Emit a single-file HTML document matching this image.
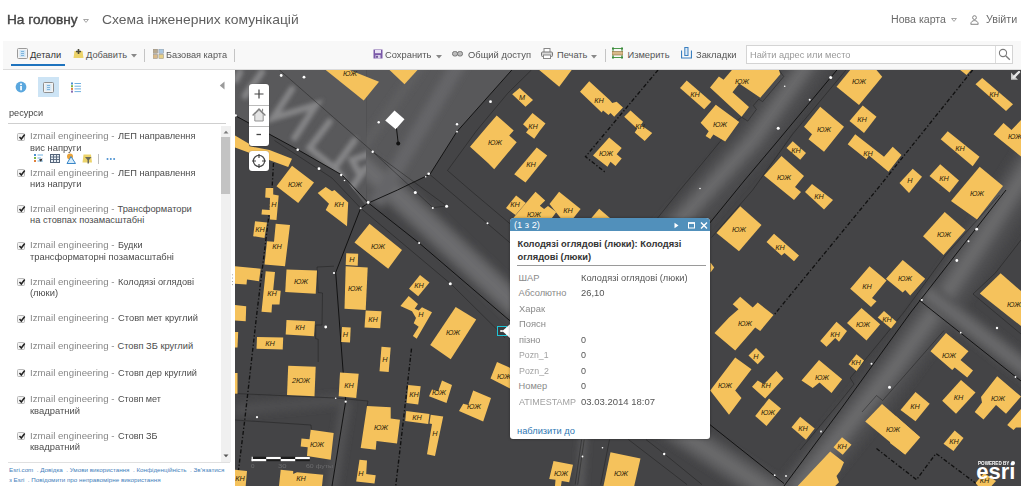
<!DOCTYPE html>
<html><head><meta charset="utf-8"><title>Схема інженерних комунікацій</title>
<style>
html,body{margin:0;padding:0;background:#fff;width:1024px;height:488px;overflow:hidden;font-family:"Liberation Sans",sans-serif}
.abs{position:absolute}
.t{position:absolute;white-space:pre;transform-origin:0 0;line-height:1em;font-family:"Liberation Sans",sans-serif}
#tb{position:absolute;left:3px;top:41px;width:1018px;height:28px;background:#f8f8f8;border-bottom:1px solid #dcdcdc}
#panel{position:absolute;left:3px;top:70px;width:230px;height:416px;background:#fff}
.sep{position:absolute;top:49px;width:1px;height:13px;background:#c4c4c4}
.cb{position:absolute;left:17px;width:8px;height:8px;background:#f4f4f4;border:1px solid #b8b8b8;border-radius:1.5px;box-sizing:border-box}
.cb svg{position:absolute;left:-0.5px;top:-1px}
#map{position:absolute;left:235px;top:70px;width:786px;height:416px;overflow:hidden;background:#444446}
#popup{position:absolute;left:510px;top:218.2px;width:200px;height:221px;background:#fff;border-radius:4px 4px 3px 3px;overflow:hidden;box-shadow:0 0 3px rgba(0,0,0,.35)}
#popup .hd{position:absolute;left:0;top:0;width:200px;height:13px;background:#5190bb}
</style></head><body>
<!-- header -->
<svg class="abs" style="left:83px;top:18.5px" width="6" height="4" viewBox="0 0 6 4"><path d="M0.6 0.5 H5.4 L3 3.4 Z" fill="none" stroke="#8f8f8f" stroke-width="0.8"/></svg>
<svg class="abs" style="left:950.5px;top:18.3px" width="6" height="4" viewBox="0 0 6 4"><path d="M0.6 0.5 H5.4 L3 3.4 Z" fill="none" stroke="#8f8f8f" stroke-width="0.8"/></svg>
<svg class="abs" style="left:969.5px;top:14.5px" width="9" height="10" viewBox="0 0 9 10"><circle cx="4.5" cy="2.6" r="1.9" fill="none" stroke="#777" stroke-width="0.9"/><path d="M0.8 9.3 C0.8 6.6 2.6 5.6 4.5 5.6 C6.4 5.6 8.2 6.6 8.2 9.3 Z" fill="none" stroke="#777" stroke-width="0.9"/></svg>
<!-- toolbar -->
<div id="tb"></div>
<div class="abs" style="left:11px;top:64px;width:54px;height:2px;background:#1e73be"></div>
<div class="sep" style="left:144px"></div><div class="sep" style="left:234px"></div><div class="sep" style="left:605px"></div>
<!-- toolbar icons -->
<svg class="abs" style="left:17px;top:48px" width="11" height="11" viewBox="0 0 11 11"><rect x="0.5" y="0.5" width="10" height="10" rx="1" fill="#f3f3f3" stroke="#9a9a9a"/><rect x="2.5" y="2" width="6" height="7" fill="#cfe6f6"/><path d="M4 3.5H7M4 5.5H7M4 7.5H7" stroke="#7fb5dd" stroke-width="1"/></svg>
<svg class="abs" style="left:73px;top:48px" width="11" height="11" viewBox="0 0 11 11"><path d="M0.5 10 L1.5 3 H9.5 L10.5 10 Z" fill="#ecd36a"/><path d="M5.5 1 V6 M3 3.5 H8" stroke="#4b4b3b" stroke-width="1.6"/></svg>
<svg class="abs" style="left:131px;top:54px" width="6" height="4" viewBox="0 0 6 4"><path d="M0 0H6L3 3.5Z" fill="#888"/></svg>
<svg class="abs" style="left:153px;top:49.3px" width="10.6" height="9.6" viewBox="0 0 10.6 9.6"><rect x="0" y="0" width="4.7" height="4.3" fill="#b7a88f" stroke="#8f8f8f" stroke-width="0.5"/><rect x="5.9" y="0" width="4.7" height="4.3" fill="#a9c6e0" stroke="#8f8f8f" stroke-width="0.5"/><rect x="0" y="5.3" width="4.7" height="4.3" fill="#d8b98a" stroke="#8f8f8f" stroke-width="0.5"/><rect x="5.9" y="5.3" width="4.7" height="4.3" fill="#e6cf86" stroke="#8f8f8f" stroke-width="0.5"/></svg>
<svg class="abs" style="left:373px;top:49px" width="10" height="10" viewBox="0 0 10 10"><path d="M0.5 0.5H9.5V9.5H0.5Z" fill="#7a58a8"/><rect x="2" y="1" width="6" height="3.2" fill="#e9e2f3"/><rect x="2.5" y="6" width="5" height="3.5" fill="#d9d0ea"/><rect x="3.2" y="6.8" width="1.6" height="2" fill="#5a3c88"/></svg>
<svg class="abs" style="left:436px;top:55px" width="6" height="4" viewBox="0 0 6 4"><path d="M0 0H6L3 3.5Z" fill="#888"/></svg>
<svg class="abs" style="left:452px;top:51px" width="11" height="6" viewBox="0 0 11 6"><rect x="0.5" y="0.5" width="5" height="4.5" rx="2" fill="#bbb" stroke="#777"/><rect x="5.5" y="0.5" width="5" height="4.5" rx="2" fill="#bbb" stroke="#777"/></svg>
<svg class="abs" style="left:541px;top:48px" width="12" height="11" viewBox="0 0 12 11"><rect x="3" y="0.5" width="6" height="4" fill="#fff" stroke="#888"/><rect x="0.5" y="4" width="11" height="4.5" rx="1" fill="#d8d8d8" stroke="#777"/><rect x="2.5" y="7" width="7" height="3.5" fill="#fff" stroke="#888"/></svg>
<svg class="abs" style="left:591px;top:55px" width="6" height="4" viewBox="0 0 6 4"><path d="M0 0H6L3 3.5Z" fill="#888"/></svg>
<svg class="abs" style="left:612px;top:47px" width="11" height="12" viewBox="0 0 11 12"><rect x="1" y="1.5" width="9" height="9" fill="none" stroke="#4c9a4c" stroke-width="1"/><rect x="0" y="4.5" width="11" height="3.5" fill="#d8b98a" stroke="#8a6d3b" stroke-width="0.6"/><rect x="0" y="0.5" width="2" height="2" fill="#3c8a3c"/><rect x="9" y="0.5" width="2" height="2" fill="#3c8a3c"/><rect x="0" y="9.5" width="2" height="2" fill="#3c8a3c"/><rect x="9" y="9.5" width="2" height="2" fill="#3c8a3c"/></svg>
<svg class="abs" style="left:681px;top:47px" width="11" height="12" viewBox="0 0 11 12"><path d="M0.5 3.5V11H10.5V3.5" fill="none" stroke="#3a7fc0" stroke-width="1.2"/><rect x="3.8" y="0.5" width="3.2" height="8" fill="#dbeaf7" stroke="#3a7fc0" stroke-width="1"/></svg>
<!-- search -->
<div class="abs" style="left:746px;top:45px;width:267px;height:19px;background:#fff;border:1px solid #d4d4d4;box-sizing:border-box"></div>
<div class="abs" style="left:995px;top:46px;width:1px;height:17px;background:#dcdcdc"></div>
<svg class="abs" style="left:998px;top:48px" width="13" height="13" viewBox="0 0 13 13"><circle cx="5" cy="5" r="3.6" fill="none" stroke="#7a7a7a" stroke-width="1.1"/><path d="M7.7 7.7 L11.8 11.8" stroke="#7a7a7a" stroke-width="1.3"/></svg>
<!-- panel -->
<div id="panel"></div>
<svg class="abs" style="left:15px;top:81px" width="12" height="12" viewBox="0 0 12 12"><circle cx="6" cy="6" r="5.4" fill="#5aa7de"/><rect x="5.2" y="5" width="1.7" height="4.3" fill="#fff"/><circle cx="6" cy="3.2" r="1" fill="#fff"/></svg>
<div class="abs" style="left:38px;top:77px;width:21px;height:19.5px;background:#cde4f5"></div>
<svg class="abs" style="left:43px;top:82px" width="11" height="11" viewBox="0 0 11 11"><rect x="0.5" y="0.5" width="10" height="10" rx="1" fill="#f3f3f3" stroke="#8f8f8f"/><rect x="2.5" y="2" width="6" height="7" fill="#d6e9f7"/><path d="M4 3.5H7M4 5.5H7M4 7.5H7" stroke="#7fb5dd" stroke-width="1"/></svg>
<svg class="abs" style="left:71px;top:82px" width="10" height="11" viewBox="0 0 10 11"><rect x="0" y="0.5" width="2" height="2" fill="#4a90d0"/><rect x="0" y="3.2" width="2" height="2" fill="#7ab648"/><rect x="0" y="5.9" width="2" height="2" fill="#e0803a"/><rect x="0" y="8.6" width="2" height="2" fill="#8a6bb0"/><path d="M3.5 1.5H10M3.5 4.2H10M3.5 6.9H10M3.5 9.6H10" stroke="#6fb0e0" stroke-width="1"/></svg>
<svg class="abs" style="left:219px;top:81px" width="6" height="9" viewBox="0 0 6 9"><path d="M5.5 0.5V8.5L0.8 4.5Z" fill="#9a9a9a"/></svg>
<div class="abs" style="left:8px;top:123px;width:218px;height:1px;background:#cfcfcf"></div>
<div class="cb" style="top:132.5px"><svg width="8" height="8" viewBox="0 0 8 8"><path d="M1.5 4 L3.3 6 L6.7 1.5" stroke="#222" stroke-width="1.5" fill="none"/></svg></div><div class="cb" style="top:169.0px"><svg width="8" height="8" viewBox="0 0 8 8"><path d="M1.5 4 L3.3 6 L6.7 1.5" stroke="#222" stroke-width="1.5" fill="none"/></svg></div><div class="cb" style="top:205.0px"><svg width="8" height="8" viewBox="0 0 8 8"><path d="M1.5 4 L3.3 6 L6.7 1.5" stroke="#222" stroke-width="1.5" fill="none"/></svg></div><div class="cb" style="top:241.5px"><svg width="8" height="8" viewBox="0 0 8 8"><path d="M1.5 4 L3.3 6 L6.7 1.5" stroke="#222" stroke-width="1.5" fill="none"/></svg></div><div class="cb" style="top:278.0px"><svg width="8" height="8" viewBox="0 0 8 8"><path d="M1.5 4 L3.3 6 L6.7 1.5" stroke="#222" stroke-width="1.5" fill="none"/></svg></div><div class="cb" style="top:314.5px"><svg width="8" height="8" viewBox="0 0 8 8"><path d="M1.5 4 L3.3 6 L6.7 1.5" stroke="#222" stroke-width="1.5" fill="none"/></svg></div><div class="cb" style="top:342.0px"><svg width="8" height="8" viewBox="0 0 8 8"><path d="M1.5 4 L3.3 6 L6.7 1.5" stroke="#222" stroke-width="1.5" fill="none"/></svg></div><div class="cb" style="top:369.0px"><svg width="8" height="8" viewBox="0 0 8 8"><path d="M1.5 4 L3.3 6 L6.7 1.5" stroke="#222" stroke-width="1.5" fill="none"/></svg></div><div class="cb" style="top:395.5px"><svg width="8" height="8" viewBox="0 0 8 8"><path d="M1.5 4 L3.3 6 L6.7 1.5" stroke="#222" stroke-width="1.5" fill="none"/></svg></div><div class="cb" style="top:432.0px"><svg width="8" height="8" viewBox="0 0 8 8"><path d="M1.5 4 L3.3 6 L6.7 1.5" stroke="#222" stroke-width="1.5" fill="none"/></svg></div>
<!-- layer row icons -->
<svg class="abs" style="left:32px;top:152.5px" width="86" height="12" viewBox="0 0 84 12">
 <g><rect x="1" y="1" width="2" height="2" fill="#4a90d0"/><rect x="1" y="4" width="2" height="2" fill="#7ab648"/><rect x="1" y="7" width="2" height="2" fill="#e0803a"/><path d="M4.5 2H10M4.5 5H8M4.5 8H10" stroke="#6fb0e0" stroke-width="1"/><path d="M6 6.5L9.5 5.5L8 9" fill="#333"/></g>
 <g transform="translate(17,0)"><rect x="0.5" y="1.5" width="9" height="8" fill="#e8eef5" stroke="#55657a"/><path d="M0.5 4H9.5M0.5 6.5H9.5M3.5 1.5V9.5M6.5 1.5V9.5" stroke="#55657a" stroke-width="0.9"/></g>
 <g transform="translate(33,0)"><circle cx="4" cy="3.5" r="3" fill="#e8a23a"/><path d="M1 10.5L5 3.5L9.5 10.5Z" fill="#d7ecfa" stroke="#3a86c8" stroke-width="1"/></g>
 <g transform="translate(49,0)"><path d="M0.5 9.5L1.5 1.5H9L10 9.5Z" fill="#ecd36a"/><path d="M3 4H9.5L7 7V10.5H5.5V7Z" fill="#6a6a5a"/></g>
 <path d="M65.5 1V11" stroke="#bdbdbd"/>
 <circle cx="74.5" cy="6" r="1" fill="#4a90d0"/><circle cx="77.8" cy="6" r="1" fill="#4a90d0"/><circle cx="81.1" cy="6" r="1" fill="#4a90d0"/>
</svg>
<!-- scrollbar -->
<div class="abs" style="left:221px;top:126px;width:9.7px;height:336px;background:#f0f0f0"></div>
<div class="abs" style="left:221px;top:137.2px;width:9px;height:56.6px;background:#c3c3c3"></div>
<svg class="abs" style="left:222.6px;top:130px" width="6" height="4" viewBox="0 0 6 4"><path d="M0.5 3.5H5.5L3 0.8Z" fill="#7a7a7a"/></svg>
<svg class="abs" style="left:222.6px;top:453.5px" width="6" height="4" viewBox="0 0 6 4"><path d="M0.5 0.5H5.5L3 3.2Z" fill="#555"/></svg>
<div class="abs" style="left:8px;top:462px;width:222px;height:1px;background:#e0e0e0"></div>
<!-- drag dots -->
<svg class="abs" style="left:231px;top:273px" width="3" height="14" viewBox="0 0 3 14"><circle cx="1.5" cy="1.8" r="0.55" fill="#999"/><circle cx="1.5" cy="5" r="0.55" fill="#999"/><circle cx="1.5" cy="8.5" r="0.55" fill="#999"/><circle cx="1.5" cy="11.6" r="0.55" fill="#999"/></svg>

<!-- MAP -->
<div id="map">
<svg width="786" height="416" viewBox="235 70 786 416" style="position:absolute;left:0;top:0">
<defs>
 <filter id="b3" x="-20%" y="-20%" width="140%" height="140%"><feGaussianBlur stdDeviation="3"/></filter>
 <filter id="b2" x="-20%" y="-20%" width="140%" height="140%"><feGaussianBlur stdDeviation="2"/></filter><filter id="b6" x="-20%" y="-20%" width="140%" height="140%"><feGaussianBlur stdDeviation="6"/></filter>
</defs>
<rect x="235" y="70" width="786" height="416" fill="#444446"/>
<clipPath id="cpA"><path d="M235 70 H366.2 V206 L342 175 L297 149.2 L235 115.5 Z"/></clipPath>
<clipPath id="cpB"><path d="M366.2 70 H1021 V486 H235 V115.5 L297 149.2 L342 175 L366.2 206 Z"/></clipPath>
<g clip-path="url(#cpA)"><rect x="235" y="70" width="132" height="140" fill="#59595b"/>
<g filter="url(#b2)" fill="none" stroke="#8e8e90" stroke-width="6.5" stroke-linecap="round" opacity="0.85">
<path d="M292 89 L273 118 L316 105 L294.5 138"/>
<path d="M329.5 121.7 L309.5 148 L334.5 168 L354.5 140.5"/><path d="M334.5 168 L342 178"/>
<path d="M366 168 L350 190 M375 152 L352 160 L360 175"/>
<path d="M262 72 L245 96 M240 72 L236 80"/>
</g></g>
<g clip-path="url(#cpB)"><path d="M366.2 70 H512 L456.7 131.9 L430 174.2 L397.5 190 L368.4 203 L366.2 206 Z" fill="#58585a"/><g id="roads" filter="url(#b3)" fill="none" stroke-linecap="butt">
<path d="M350.0 154.0 L394.0 192.0 L512.0 302.0 L558.0 345.0" stroke="#555557" stroke-width="29" opacity="1"/><path d="M350.0 154.0 L394.0 192.0 L512.0 302.0 L558.0 345.0" stroke="#626264" stroke-width="22" opacity="1"/><path d="M350.0 154.0 L394.0 192.0 L512.0 302.0 L558.0 345.0" stroke="#6c6c6e" stroke-width="13" opacity="1"/><path d="M828.0 36.0 L805.0 70.0 L755.0 140.0 L688.0 217.4 L634.0 276.0" stroke="#4c4c4e" stroke-width="40" opacity="1"/><path d="M826.0 36.0 L803.0 70.0 L753.0 140.0 L683.0 217.4 L630.0 276.0" stroke="#535355" stroke-width="26" opacity="1"/><path d="M826.0 36.0 L803.0 70.0 L753.0 140.0 L683.0 217.4 L630.0 276.0" stroke="#5f5f61" stroke-width="17.16" opacity="1"/><path d="M826.0 36.0 L803.0 70.0 L753.0 140.0 L683.0 217.4 L630.0 276.0" stroke="#69696b" stroke-width="8.84" opacity="1"/><path d="M1043.0 148.0 L989.0 232.0 L935.0 314.0 L896.0 368.0 L793.0 497.0" stroke="#4c4c4e" stroke-width="42" opacity="1"/><path d="M1041.0 148.0 L987.0 232.0 L933.0 314.0 L894.0 368.0 L791.0 497.0" stroke="#535355" stroke-width="30" opacity="1"/><path d="M1041.0 148.0 L987.0 232.0 L933.0 314.0 L894.0 368.0 L791.0 497.0" stroke="#5f5f61" stroke-width="19.8" opacity="1"/><path d="M1041.0 148.0 L987.0 232.0 L933.0 314.0 L894.0 368.0 L791.0 497.0" stroke="#69696b" stroke-width="10.200000000000001" opacity="1"/><path d="M926.0 292.0 L1041.0 381.0" stroke="#535355" stroke-width="23" opacity="1"/><path d="M926.0 292.0 L1041.0 381.0" stroke="#5f5f61" stroke-width="15.180000000000001" opacity="1"/><path d="M926.0 292.0 L1041.0 381.0" stroke="#69696b" stroke-width="7.82" opacity="1"/><path d="M600.0 380.0 L692.0 440.0 L760.5 484.6 L790.0 504.0" stroke="#535355" stroke-width="30" opacity="1"/><path d="M600.0 380.0 L692.0 440.0 L760.5 484.6 L790.0 504.0" stroke="#5f5f61" stroke-width="19.8" opacity="1"/><path d="M600.0 380.0 L692.0 440.0 L760.5 484.6 L790.0 504.0" stroke="#69696b" stroke-width="10.200000000000001" opacity="1"/><path d="M584.0 430.0 L580.0 490.0" stroke="#58585a" stroke-width="8" opacity="1"/><path d="M346.0 401.0 L332.0 490.0" stroke="#515153" stroke-width="12" opacity="1"/><path d="M235.0 410.0 L300.0 404.0 L340.0 400.0" stroke="#4d4d4f" stroke-width="12" opacity="1"/><path d="M461.0 60.0 L455.0 70.0 L407.5 150.5 L376.0 204.0" stroke="#656567" stroke-width="15" opacity="1"/><path d="M423.0 60.0 L417.5 70.0 L375.0 130.5 L360.0 152.0" stroke="#5e5e60" stroke-width="9" opacity="1"/>
</g></g>
<g id="thin" fill="none" stroke="#1a1a1a" stroke-width="0.45">
<path d="M279.5 70.0 L372.7 151.7"/><path d="M372.7 151.7 L432.9 207.6 L446.7 206.0 L372.7 151.7"/><path d="M846.0 70.0 L793.0 133.6 L752.7 190.0 L711.5 237.5"/><path d="M999.7 195.0 L945.2 255.5 L904.0 312.0 L890.2 329.2 L850.2 378.0 L854.0 384.2 L839.0 403.0 L800.0 450.0"/><path d="M779.0 70.0 L783.7 76.6 L762.6 101.6 L758.7 99.2 L753.3 105.5 L756.4 109.4 L747.8 121.1 L741.6 117.2 L737.6 120.3 L700.0 166.0 L680.0 190.0 L656.0 220.0"/><path d="M235.0 393.5 L335.7 398.0 L368.0 401.0 L367.0 406.0"/><path d="M235.0 420.0 L311.0 425.0 L311.5 430.0"/><path d="M646.0 439.6 L664.0 453.6 L702.0 484.6"/><path d="M628.5 439.6 L687.0 484.6"/><path d="M581.6 439.6 L575.2 484.6"/><path d="M584.2 439.6 L577.7 484.6"/><path d="M609.5 439.6 L600.6 484.6"/><path d="M995.7 272.7 L973.0 294.0 L1021.0 334.0"/><path d="M1021.0 240.0 L995.7 272.7"/><path d="M944.0 330.5 L882.7 400.5 L876.5 395.5 L862.0 412.0"/><path d="M531.4 70.0 L507.8 93.2 L476.4 130.9 L447.5 170.5 L470.0 190.0 L515.0 228.0"/><path d="M334.0 266.2 L317.0 267.0 L318.2 292.5 L322.5 293.0 L322.0 325.0 L315.7 325.0 L315.7 338.7 L318.2 339.2 L318.2 362.0"/><path d="M274.5 140.5 L332.0 178.0 L360.7 208.2 L451.4 284.4 L497.4 329.9 L505.0 338.0"/><path d="M429.5 174.2 L515.0 247.0"/>
</g>
<g id="lines" fill="none" stroke="#0c0c0c" stroke-width="0.9">
<path d="M235.0 115.5 L297.0 149.2 L342.0 175.0 L368.4 203.0 L419.1 243.0 L505.1 316.7 L512.0 322.5"/><path d="M368.4 203.0 L360.7 208.2 L335.7 272.5 L343.2 372.5 L345.7 401.2 L332.0 486.0"/><path d="M511.8 70.0 L456.7 131.9 L430.0 174.2 L397.5 190.0 L368.4 203.0"/><path d="M836.9 70.0 L775.2 144.0 L744.0 181.0 L700.0 235.0"/><path d="M1006.0 190.0 L911.0 312.0 L840.2 410.0 L784.0 486.0"/><path d="M710.0 424.7 L784.0 483.5"/><path d="M919.0 300.0 L1021.0 381.0"/>
</g>
<g id="dashes" fill="none" stroke="#111" stroke-width="1.35" stroke-dasharray="4 2 1.3 2">
<path d="M658.0 70.0 L585.5 156.7 L605.5 172.5"/><path d="M972.7 70.0 L876.5 190.0 L774.0 315.0"/><path d="M273.5 163.0 L272.0 190.0 L257.0 312.0 L244.5 422.0 L236.5 486.0"/><path d="M411.5 348.7 L403.2 422.0 L395.7 486.0"/><path d="M876.5 448.5 L916.5 479.7 L936.0 453.5 L973.0 481.2 L985.0 490.0"/>
</g>
<g fill="#f5c25c"><polygon points="325.7,70.0 349.5,70.0 379.0,81.7 363.7,100.5"/><polygon points="389.5,70.0 417.5,70.0 404.5,84.2"/><polygon points="488.0,125.5 470.0,146.7 488.0,163.0 494.2,169.2 516.7,142.2 509.2,135.5 513.7,130.5 496.7,115.5"/><polygon points="235.0,135.5 249.0,143.7 249.5,146.2 269.5,150.0 292.0,158.7 288.2,167.0 235.0,147.5"/><polygon points="276.5,186.2 292.0,165.7 314.0,182.5 298.2,203.0"/><polygon points="539.2,70.0 571.7,70.0 559.2,86.7"/><polygon points="512.2,94.2 519.7,88.0 533.0,100.0 525.5,106.7"/><polygon points="523.0,124.2 532.5,113.0 545.5,123.5 540.0,130.5 534.2,138.7 526.0,132.5 528.5,129.2"/><polygon points="514.2,174.2 536.7,147.5 547.2,155.5 525.5,182.5"/><polygon points="580.0,91.7 589.2,81.2 609.7,100.0 612.2,103.0 616.7,101.7 623.0,107.5 614.2,116.7 610.5,113.0 608.5,115.0 603.0,110.5 601.7,112.5"/><polygon points="624.2,116.7 630.5,110.5 643.0,121.7 641.0,125.0 652.2,133.0 644.7,141.0 634.7,132.5 637.2,128.7"/><polygon points="593.0,155.5 609.2,137.5 621.7,148.0 616.7,154.2 621.7,158.5 615.5,166.0 610.5,161.7 607.5,166.7"/><polygon points="680.0,88.0 686.7,80.5 711.2,101.7 704.2,109.2"/><polygon points="710.0,87.5 718.9,76.6 723.6,79.7 731.9,70.0 779.0,70.0 780.3,74.2 760.3,97.7 739.2,83.6 732.5,92.2 749.0,107.0 741.6,116.7"/><polygon points="700.6,122.7 715.8,104.7 739.2,121.9 725.2,141.4 713.4,134.4 710.3,139.1 705.6,136.0 708.7,131.3"/><polygon points="836.5,86.7 850.2,70.0 876.5,70.0 882.2,76.7 859.0,105.0"/><polygon points="849.5,121.0 862.7,105.5 876.5,116.7 864.0,133.0"/><polygon points="804.0,126.7 820.2,106.7 844.0,126.7 824.0,151.7 808.5,139.2 812.0,134.2"/><polygon points="786.5,148.0 792.7,141.2 806.0,153.0 800.2,159.7"/><polygon points="764.0,175.5 781.5,156.0 804.0,176.0 795.0,187.0 801.0,192.0 794.0,200.0"/><polygon points="847.7,144.2 855.2,134.2 884.0,156.7 892.7,146.7 901.5,155.0 888.5,171.7 869.0,155.5 866.5,159.2"/><polygon points="899.5,183.0 912.7,168.7 922.0,176.7 909.0,193.0"/><polygon points="929.5,176.0 940.2,164.2 959.0,180.5 949.5,192.5"/><polygon points="940.7,139.2 947.7,131.2 979.5,156.7 972.7,166.2"/><polygon points="975.5,84.2 982.2,78.0 1013.0,104.2 1006.0,111.0"/><polygon points="951.0,201.0 979.7,166.7 1003.0,186.0 977.0,219.5"/><polygon points="960.2,70.0 971.0,70.0 966.5,75.0"/><polygon points="993.5,134.2 1003.5,123.0 1011.5,130.0 1021.0,120.0 1021.0,156.5"/><polygon points="265.7,188.0 273.2,188.0 273.2,194.5 278.7,195.5 276.5,220.0 270.0,219.5 270.0,215.0 261.5,214.5 262.0,209.5 269.5,210.0 270.0,198.0 265.2,197.5"/><polygon points="317.7,193.0 325.7,187.0 332.0,191.2 334.5,190.0 348.2,202.5 347.0,226.2 325.7,210.0 329.0,203.7"/><polygon points="255.0,221.2 267.0,222.5 264.5,238.0 253.2,236.2"/><polygon points="275.7,223.7 290.0,225.0 285.0,266.2 264.5,264.5 267.0,241.2 274.0,241.7"/><polygon points="235.0,266.2 260.7,268.7 259.0,281.2 247.0,279.5 246.5,284.5 235.0,283.7"/><polygon points="265.7,271.2 275.0,272.0 273.2,290.0 280.7,290.7 279.5,304.5 272.0,304.5 271.5,312.5 261.5,311.7"/><polygon points="286.5,269.5 317.0,270.5 315.7,293.7 285.2,292.0"/><polygon points="346.2,253.2 358.2,253.7 357.7,265.7 345.7,265.0"/><polygon points="345.7,266.2 367.7,267.5 365.7,310.0 344.5,308.7"/><polygon points="354.5,242.5 369.5,223.7 402.0,250.0 388.2,268.7"/><polygon points="409.0,288.7 420.0,275.0 429.5,282.5 418.2,296.2"/><polygon points="400.4,306.0 408.7,296.0 418.0,304.0 414.7,308.7 418.7,310.4 422.0,307.3 432.0,312.3 416.7,338.7 412.9,336.0 418.7,326.7 413.7,323.3 416.0,318.0 412.0,311.3"/><polygon points="235.0,305.0 246.2,306.2 245.7,321.2 235.0,320.5"/><polygon points="506.0,208.0 516.1,195.5 525.8,203.0 515.5,215.0"/><polygon points="512.9,218.6 535.5,191.8 545.2,200.4 539.8,205.8 544.1,209.0 548.0,206.0 556.3,212.0 551.6,218.6"/><polygon points="549.5,204.1 559.1,191.8 580.6,209.0 573.1,218.6 561.0,218.6"/><polygon points="591.0,218.5 599.2,208.7 610.5,218.5"/><polygon points="716.5,233.0 740.2,206.2 761.5,225.0 739.0,251.2"/><polygon points="710.5,262.5 714.2,267.5 710.5,272.5"/><polygon points="805.0,192.0 812.0,184.0 833.0,200.0 824.0,209.5"/><polygon points="766.5,242.0 774.0,233.7 799.0,255.5 794.0,261.2 784.5,253.0 781.5,255.5"/><polygon points="923.0,236.2 944.7,212.0 965.5,230.0 943.5,255.0"/><polygon points="850.2,288.7 869.5,266.2 886.5,280.5 872.0,298.0 876.5,301.2 871.0,307.0"/><polygon points="886.0,278.7 902.7,260.0 925.2,278.7 910.2,295.5 905.2,290.0 902.7,292.5"/><polygon points="979.8,293.4 1000.6,273.2 1021.0,291.0 1021.0,326.0"/><polygon points="286.5,320.0 315.0,321.2 314.0,336.2 285.7,334.5"/><polygon points="257.0,337.0 283.2,337.5 282.7,349.5 256.5,348.7"/><polygon points="235.0,332.0 238.2,332.0 237.5,347.5 235.0,347.5"/><polygon points="235.0,373.0 237.5,373.0 237.5,393.7 235.0,393.7"/><polygon points="288.2,365.7 315.7,366.7 314.5,396.2 287.0,395.0"/><polygon points="365.7,310.5 381.5,311.2 380.2,328.2 364.5,327.5"/><polygon points="342.0,327.0 350.7,327.5 350.0,342.5 341.2,342.0"/><polygon points="381.5,346.7 390.7,347.5 388.7,372.0 379.5,371.2"/><polygon points="340.0,372.5 358.7,373.7 356.2,398.0 338.7,396.2"/><polygon points="430.2,345.0 455.7,307.0 476.2,319.5 450.7,359.2"/><polygon points="408.2,385.0 420.7,386.2 418.2,404.5 406.5,403.0"/><polygon points="429.0,396.2 432.0,389.5 438.2,391.2 442.0,380.5 452.0,385.0 446.5,403.0"/><polygon points="459.0,411.0 463.2,403.7 468.2,405.0 473.2,390.5 491.0,398.0 488.0,407.0 483.2,421.5"/><polygon points="367.0,406.0 390.7,407.2 390.7,418.5 400.0,419.7 397.0,443.5 376.5,441.0 375.7,449.7 360.7,448.0"/><polygon points="310.7,429.7 333.7,433.0 330.7,459.7 307.0,456.0 307.7,447.2 300.7,446.5 301.5,438.5 309.5,439.2"/><polygon points="235.0,469.7 247.0,471.0 245.7,486.0 235.0,486.0"/><polygon points="280.7,469.7 293.2,471.0 293.2,474.0 297.0,472.2 323.2,474.7 322.0,486.0 279.0,486.0"/><polygon points="359.5,459.7 367.0,460.5 366.2,474.0 375.7,475.2 374.5,483.5 356.2,481.5"/><polygon points="406.2,411.0 429.5,414.0 428.2,424.0 405.2,421.0"/><polygon points="430.7,414.7 443.2,416.5 435.0,456.0 427.0,454.2 432.0,424.0 429.5,423.5"/><polygon points="490.5,378.5 497.0,362.0 515.0,370.0 510.0,388.5"/><polygon points="549.2,479.0 553.5,461.0 573.0,464.7 569.2,482.2 561.7,481.0 561.0,486.0 555.0,486.0 555.5,479.7"/><polygon points="603.5,486.0 610.5,452.2 640.5,458.5 634.2,486.0"/><polygon points="714.5,333.0 729.0,317.5 738.5,309.2 732.7,304.2 740.2,296.7 752.7,307.5 757.7,302.5 773.5,315.0 760.2,331.0 755.2,327.5 735.2,350.5"/><polygon points="748.5,355.5 756.0,348.0 764.7,356.7 757.7,364.2"/><polygon points="710.2,390.5 735.2,357.5 751.5,369.2 735.2,390.5 741.5,398.0 729.0,414.7"/><polygon points="752.0,386.7 757.7,380.5 764.0,384.2 776.5,371.0 783.5,378.5 765.2,398.5"/><polygon points="755.2,416.0 769.0,398.5 781.0,408.5 766.5,426.0"/><polygon points="791.5,427.2 800.2,416.7 814.7,428.5 806.0,439.7"/><polygon points="820.2,341.0 836.5,321.7 847.0,331.0 839.0,341.7 835.2,338.0 826.5,346.7"/><polygon points="847.0,323.0 861.5,308.0 880.2,324.2 866.5,340.5"/><polygon points="877.7,317.5 884.0,311.0 896.5,321.7 891.0,328.5"/><polygon points="848.5,364.2 856.5,354.2 864.0,360.5 856.5,371.0"/><polygon points="801.5,380.5 819.0,360.0 842.2,379.2 831.5,393.0 819.5,382.5 812.7,388.0"/><polygon points="833.5,447.2 842.0,437.2 851.5,444.7 842.7,454.7"/><polygon points="797.7,486.0 830.2,451.5 844.0,462.2 840.2,471.0 836.5,476.0 839.0,482.2 835.2,486.0"/><polygon points="865.2,421.5 882.0,404.0 920.2,437.2 905.2,454.7"/><polygon points="900.5,410.0 915.5,392.0 929.7,403.7 915.5,421.2"/><polygon points="930.5,351.2 946.0,333.0 968.5,351.2 960.5,360.0 973.0,370.5 967.2,377.5 954.7,367.5 952.2,370.0"/><polygon points="942.2,400.7 961.0,380.0 975.5,392.5 956.0,413.7"/><polygon points="981.0,397.0 997.2,376.2 1021.0,396.5 1006.0,413.7 996.0,405.0 983.5,419.5 974.7,412.0 982.0,402.5"/><polygon points="1007.2,425.0 1021.0,409.0 1021.0,427.5 1016.0,427.5 1013.5,430.0"/><polygon points="896.0,416.2 919.7,437.0 904.5,454.0 890.0,443.0"/><polygon points="943.5,443.7 954.7,430.5 963.5,438.0 953.5,451.0"/><polygon points="975.5,483.0 984.0,473.0 996.0,481.0 991.5,486.0 978.0,486.0"/></g>
<g font-family='"Liberation Sans", sans-serif' font-size="7.3" font-style="italic" fill="#2e240c" text-anchor="middle"><text x="350" y="76.1">ЮЖ</text><text x="295" y="186.6">ЮЖ</text><text x="495" y="144.6">ЮЖ</text><text x="522" y="100.1">М</text><text x="533" y="128.6">КН</text><text x="531" y="166.6">КН</text><text x="599" y="102.6">КН</text><text x="640" y="128.6">КН</text><text x="606" y="155.6">ЮЖ</text><text x="695" y="97.1">КН</text><text x="742" y="83.6">ЮЖ</text><text x="720" y="126.6">ЮЖ</text><text x="859" y="83.6">ЮЖ</text><text x="862" y="121.6">КН</text><text x="824" y="131.6">ЮЖ</text><text x="796" y="152.6">КН</text><text x="784" y="179.6">ЮЖ</text><text x="868" y="155.6">КН</text><text x="910" y="182.6">Н</text><text x="944" y="180.6">КН</text><text x="960" y="151.1">КН</text><text x="994" y="96.6">КН</text><text x="977" y="195.6">ЮЖ</text><text x="1015" y="138.6">ЮЖ</text><text x="274" y="206.6">Н</text><text x="339" y="206.6">КН</text><text x="260" y="231.6">КН</text><text x="277" y="248.6">КН</text><text x="272" y="295.6">КН</text><text x="301" y="284.1">ЮЖ</text><text x="352" y="262.1">Н</text><text x="355" y="290.6">ЮЖ</text><text x="378" y="248.6">ЮЖ</text><text x="419" y="288.1">КН</text><text x="515" y="207.1">КН</text><text x="534" y="216.6">ЮЖ</text><text x="568" y="213.1">КН</text><text x="739" y="231.6">ЮЖ</text><text x="819" y="198.6">КН</text><text x="780" y="249.6">КН</text><text x="944" y="236.6">ЮЖ</text><text x="867" y="288.6">КН</text><text x="905" y="280.6">ЮЖ</text><text x="1014" y="306.6">ЮЖ</text><text x="300" y="330.1">КН</text><text x="270" y="345.6">КН</text><text x="301" y="383.1">2ЮЖ</text><text x="373" y="321.6">КН</text><text x="345.5" y="337.1">Н</text><text x="385" y="361.6">Н</text><text x="349" y="387.6">КН</text><text x="421" y="316.6">Н</text><text x="453" y="335.1">ЮЖ</text><text x="414" y="396.6">КН</text><text x="439" y="395.1">ЮЖ</text><text x="474" y="408.6">ЮЖ</text><text x="381" y="430.1">ЮЖ</text><text x="317" y="447.1">ЮЖ</text><text x="240" y="480.6">КН</text><text x="301" y="481.1">КН</text><text x="361" y="475.6">Н</text><text x="417" y="419.6">КН</text><text x="435" y="435.6">Н</text><text x="504" y="379.1">ЮЖ</text><text x="561" y="475.6">ЮЖ</text><text x="621" y="476.1">ЮЖ</text><text x="745" y="325.6">ЮЖ</text><text x="756" y="358.6">Н</text><text x="725" y="387.6">ЮЖ</text><text x="766" y="387.6">КН</text><text x="768" y="414.6">ЮЖ</text><text x="803" y="430.6">КН</text><text x="835" y="336.6">КН</text><text x="863" y="326.6">ЮЖ</text><text x="887" y="322.1">КН</text><text x="856" y="364.6">КН</text><text x="822" y="379.6">ЮЖ</text><text x="842" y="448.6">КН</text><text x="893" y="431.6">ЮЖ</text><text x="949" y="357.6">ЮЖ</text><text x="958.5" y="399.6">КН</text><text x="998" y="400.6">ЮЖ</text><text x="915" y="408.6">КН</text><text x="954" y="443.6">КН</text><text x="984.5" y="482.6">КН</text></g>
<g id="dots" fill="#fff"><circle cx="281.2" cy="75.5" r="1.4"/><circle cx="304" cy="77.2" r="1.4"/><circle cx="235.7" cy="115.5" r="1.2"/><circle cx="297.7" cy="149.7" r="1.3"/><circle cx="319" cy="168.7" r="1.4"/><circle cx="341.2" cy="175" r="1.2"/><circle cx="344.5" cy="180.5" r="0.8"/><circle cx="378.7" cy="122.2" r="1.2"/><circle cx="372.7" cy="151.7" r="1.2"/><circle cx="457" cy="124.2" r="1.2"/><circle cx="457" cy="131.7" r="0.9"/><circle cx="428.7" cy="173.7" r="1.3"/><circle cx="425.7" cy="176.7" r="0.8"/><circle cx="490.5" cy="101.7" r="1.4"/><circle cx="700" cy="188.5" r="0.8"/><circle cx="830.7" cy="77.5" r="1.5"/><circle cx="784.7" cy="86.2" r="0.8"/><circle cx="809.7" cy="99.7" r="1"/><circle cx="778.2" cy="128.2" r="1.5"/><circle cx="415.3" cy="192.5" r="1.5"/><circle cx="368.2" cy="202.5" r="1.4"/><circle cx="360.7" cy="208.2" r="1"/><circle cx="432.8" cy="208" r="1"/><circle cx="446.6" cy="206.3" r="1.5"/><circle cx="487.5" cy="223.2" r="1"/><circle cx="419.1" cy="243" r="1"/><circle cx="450.3" cy="283.7" r="1.5"/><circle cx="334" cy="273" r="1.1"/><circle cx="976.7" cy="229.2" r="1.4"/><circle cx="968.5" cy="241.2" r="1"/><circle cx="956.8" cy="260.5" r="1.4"/><circle cx="921.8" cy="300" r="1.1"/><circle cx="325.7" cy="327" r="1.4"/><circle cx="335.7" cy="398.2" r="0.8"/><circle cx="345.7" cy="401.7" r="1.1"/><circle cx="257" cy="417.2" r="1.1"/><circle cx="602.5" cy="447.7" r="0.8"/><circle cx="582.5" cy="456.5" r="0.9"/><circle cx="664.2" cy="454" r="1.2"/><circle cx="889.5" cy="387.2" r="1.5"/><circle cx="821" cy="431.5" r="0.9"/><circle cx="774.7" cy="475.2" r="0.9"/><circle cx="786" cy="476" r="0.9"/><circle cx="871.5" cy="363.7" r="1"/><circle cx="960.7" cy="332.7" r="0.9"/><circle cx="997" cy="328" r="1.2"/><circle cx="1015.5" cy="377" r="0.9"/></g>

<path d="M394.5 110.5 L404.5 119.2 L395.7 129.2 L385.2 120.5 Z" fill="#fff"/>
<path d="M396.5 128.5 L398.2 143" stroke="#111" stroke-width="1" fill="none"/>
<circle cx="398.2" cy="143.5" r="2" fill="#111"/>
<g stroke="none">
<rect x="251.6" y="456.7" width="58.2" height="4.5" fill="#1c1c1c"/>
<rect x="251.6" y="456.7" width="1.2" height="4.5" fill="#fff"/>
<rect x="251.6" y="459" width="14.6" height="2.2" fill="#fff"/>
<rect x="266.2" y="456.9" width="14.5" height="2.2" fill="#fff"/>
<rect x="280.7" y="459" width="14.5" height="2.2" fill="#fff"/>
<rect x="295.2" y="456.9" width="14.6" height="2.2" fill="#fff"/>
</g>

</svg>
</div>
<!-- zoom controls -->
<div class="abs" style="left:249px;top:83.5px;width:20px;height:62px;background:#fff;border-radius:3px;box-shadow:0 0 1px rgba(0,0,0,.5)"></div>
<div class="abs" style="left:249px;top:104.5px;width:20px;height:1px;background:#bbb"></div>
<div class="abs" style="left:249px;top:125.5px;width:20px;height:1px;background:#bbb"></div>
<svg class="abs" style="left:249px;top:83.5px" width="20" height="62" viewBox="0 0 20 62"><path d="M5.5 10H14.5M10 5.5V14.5" stroke="#444" stroke-width="1.2"/><path d="M3.6 31.5L10 25L16.4 31.5" fill="none" stroke="#808080" stroke-width="1.3"/><path d="M5.8 30.2L10 26.2L14.2 30.2V37H5.8Z" fill="#e4e4e4" stroke="#8a8a8a" stroke-width="0.9"/><path d="M13.6 27.6V24.8" stroke="#808080" stroke-width="1"/><path d="M7.5 50.5H12" stroke="#444" stroke-width="1.3"/></svg>
<div class="abs" style="left:249px;top:151px;width:20px;height:19.5px;background:#fff;border-radius:3px;box-shadow:0 0 1px rgba(0,0,0,.5)"></div>
<svg class="abs" style="left:249px;top:151px" width="20" height="20" viewBox="0 0 20 20"><circle cx="10" cy="10" r="5.6" fill="none" stroke="#444" stroke-width="1.2"/><path d="M10 3V7M10 13V17M3 10H7M13 10H17" stroke="#444" stroke-width="1.2"/></svg>
<!-- popup -->
<div class="abs" style="left:497.2px;top:326px;width:9.4px;height:9.8px;border:1.6px solid #1fc4d6;box-sizing:border-box;background:#3c3c3e"></div>
<div class="abs" style="left:500.4px;top:329.6px;width:2.6px;height:2.6px;border-radius:2px;background:#e8e8e8"></div>
<svg class="abs" style="left:501px;top:323px" width="10" height="16" viewBox="501 323 10 16"><path d="M510.5 323.8L502.3 331L510.5 338.4Z" fill="#fff"/></svg>
<div id="popup"><div class="hd"></div>
<svg class="abs" style="left:164px;top:2.5px" width="34" height="9" viewBox="0 0 34 9"><path d="M0.5 1.8V7.2L4.5 4.5Z" fill="#fff"/><rect x="14.5" y="2" width="6" height="5" fill="none" stroke="#fff" stroke-width="1"/><path d="M14 2H21" stroke="#fff" stroke-width="1.6"/><path d="M27 1.5L33 7.5M33 1.5L27 7.5" stroke="#fff" stroke-width="1.4"/></svg>
<div class="abs" style="left:7px;top:47.3px;width:189px;height:1px;background:#9a9a9a"></div>
</div>
<!-- esri logo -->
<div class="t" style="left:978px;top:461.4px;font-size:9.2px;font-weight:700;color:#fff;transform:scale(0.5,0.5)">POWERED BY</div>
<div class="t" style="left:976.2px;top:461.2px;font-size:22px;font-weight:700;color:#fff">esri</div>
<div class="abs" style="left:1010.6px;top:461px;width:4.4px;height:4.4px;border-radius:3px;background:#fff"></div>
<!-- fullscreen icon -->
<svg class="abs" style="left:1010px;top:71px" width="11" height="10" viewBox="0 0 11 10"><path d="M1 1.6V8.8H8Z" fill="#c9c9c9"/><path d="M3.6 6.4L9 1" stroke="#e6e6e6" stroke-width="2.4" stroke-linecap="round"/></svg>
<span class="t" style="left:6.70px;top:13.30px;font-size:13px;color:#444;transform:scaleX(1.0508);-webkit-text-stroke:0.4px #444;">На головну</span>
<span class="t" style="left:102.30px;top:13.30px;font-size:13px;color:#606060;transform:scaleX(1.0664);">Схема інженерних комунікацій</span>
<span class="t" style="left:891.00px;top:15.29px;font-size:10px;color:#6a6a6a;transform:scaleX(1.0606);">Нова карта</span>
<span class="t" style="left:985.80px;top:15.29px;font-size:10px;color:#6a6a6a;transform:scaleX(1.0730);">Увійти</span>
<span class="t" style="left:30.00px;top:50.93px;font-size:9.3px;color:#333;">Детали</span>
<span class="t" style="left:86.00px;top:50.93px;font-size:9.3px;color:#555;">Добавить</span>
<span class="t" style="left:166.00px;top:50.93px;font-size:9.3px;color:#555;transform:scaleX(0.9859);">Базовая карта</span>
<span class="t" style="left:385.00px;top:50.93px;font-size:9.3px;color:#555;transform:scaleX(1.0062);">Сохранить</span>
<span class="t" style="left:468.00px;top:50.93px;font-size:9.3px;color:#555;transform:scaleX(1.0083);">Общий доступ</span>
<span class="t" style="left:557.00px;top:50.93px;font-size:9.3px;color:#555;">Печать</span>
<span class="t" style="left:627.50px;top:50.93px;font-size:9.3px;color:#555;">Измерить</span>
<span class="t" style="left:695.50px;top:50.93px;font-size:9.3px;color:#555;transform:scaleX(1.0062);">Закладки</span>
<span class="t" style="left:750.00px;top:50.93px;font-size:9.3px;color:#999;transform:scaleX(0.9927);">Найти адрес или место</span>
<span class="t" style="left:9.00px;top:109.13px;font-size:9.3px;color:#444;transform:scaleX(0.9838);">ресурси</span>
<span class="t" style="left:9.00px;top:466.71px;font-size:6.25px;color:#4581bb;">Esri.com  . Довідка  . Умови використання  . Конфіденційність  . Зв'язатися</span>
<span class="t" style="left:9.00px;top:476.71px;font-size:6.25px;color:#4581bb;">з Esri  . Повідомити про неправомірне використання</span>
<span class="t" style="left:514.00px;top:221.13px;font-size:9.3px;color:#fff;">(1 з 2)</span>
<span class="t" style="left:517.50px;top:240.13px;font-size:9.3px;color:#333;font-weight:700;">Колодязі оглядові (люки): Колодязі</span>
<span class="t" style="left:517.50px;top:252.63px;font-size:9.3px;color:#333;font-weight:700;">оглядові (люки)</span>
<span class="t" style="left:518.50px;top:273.63px;font-size:9.3px;color:#8a8a8a;">ШАР</span>
<span class="t" style="left:581.00px;top:273.63px;font-size:9.3px;color:#555;transform:scaleX(0.9941);">Колодязі оглядові (люки)</span>
<span class="t" style="left:518.50px;top:289.13px;font-size:9.3px;color:#8a8a8a;">Абсолютно</span>
<span class="t" style="left:581.00px;top:289.13px;font-size:9.3px;color:#555;transform:scaleX(1.0097);">26,10</span>
<span class="t" style="left:518.50px;top:304.63px;font-size:9.3px;color:#8a8a8a;transform:scaleX(1.0082);">Харак</span>
<span class="t" style="left:518.50px;top:320.13px;font-size:9.3px;color:#8a8a8a;transform:scaleX(1.0120);">Поясн</span>
<span class="t" style="left:518.50px;top:335.63px;font-size:9.3px;color:#8a8a8a;transform:scaleX(0.9919);">пізно</span>
<span class="t" style="left:581.00px;top:335.63px;font-size:9.3px;color:#555;transform:scaleX(0.9668);">0</span>
<span class="t" style="left:518.50px;top:351.13px;font-size:9.3px;color:#a0a0a0;transform:scaleX(0.9351);">Pozn_1</span>
<span class="t" style="left:581.00px;top:351.13px;font-size:9.3px;color:#555;transform:scaleX(0.9668);">0</span>
<span class="t" style="left:518.50px;top:366.63px;font-size:9.3px;color:#a0a0a0;transform:scaleX(0.9510);">Pozn_2</span>
<span class="t" style="left:581.00px;top:366.63px;font-size:9.3px;color:#555;transform:scaleX(0.9668);">0</span>
<span class="t" style="left:518.50px;top:382.13px;font-size:9.3px;color:#8a8a8a;">Номер</span>
<span class="t" style="left:581.00px;top:382.13px;font-size:9.3px;color:#555;transform:scaleX(0.9668);">0</span>
<span class="t" style="left:518.50px;top:397.63px;font-size:9.3px;color:#a0a0a0;transform:scaleX(0.9651);">ATIMESTAMP</span>
<span class="t" style="left:581.00px;top:397.63px;font-size:9.3px;color:#555;transform:scaleX(1.0221);">03.03.2014 18:07</span>
<span class="t" style="left:517.00px;top:426.63px;font-size:9.3px;color:#2f77b3;">наблизити до</span>
<span class="t" style="left:250.70px;top:462.75px;font-size:6.2px;color:#6c6c6e;transform:scaleX(1.0136);">0</span>
<span class="t" style="left:277.60px;top:462.75px;font-size:6.2px;color:#6c6c6e;transform:scaleX(1.2470);">30</span>
<span class="t" style="left:306.00px;top:462.75px;font-size:6.2px;color:#6c6c6e;transform:scaleX(1.1228);">60 футы</span>
<span class="t" style="left:30.00px;top:132.13px;font-size:9.3px;color:#868686;transform:scaleX(1.0414);">Izmail engineering -</span>
<span class="t" style="left:117.50px;top:132.13px;font-size:9.3px;color:#4c4c4c;transform:scaleX(0.9949);">ЛЕП направлення</span>
<span class="t" style="left:30.00px;top:143.83px;font-size:9.3px;color:#4c4c4c;transform:scaleX(1.0094);">вис напруги</span>
<span class="t" style="left:30.00px;top:168.63px;font-size:9.3px;color:#868686;transform:scaleX(1.0414);">Izmail engineering -</span>
<span class="t" style="left:117.50px;top:168.63px;font-size:9.3px;color:#4c4c4c;transform:scaleX(0.9949);">ЛЕП направлення</span>
<span class="t" style="left:30.00px;top:180.33px;font-size:9.3px;color:#4c4c4c;transform:scaleX(1.0132);">низ напруги</span>
<span class="t" style="left:30.00px;top:204.63px;font-size:9.3px;color:#868686;transform:scaleX(1.0414);">Izmail engineering -</span>
<span class="t" style="left:117.50px;top:204.63px;font-size:9.3px;color:#4c4c4c;">Трансформатори</span>
<span class="t" style="left:30.00px;top:216.33px;font-size:9.3px;color:#4c4c4c;">на стовпах позамасштабні</span>
<span class="t" style="left:30.00px;top:241.13px;font-size:9.3px;color:#868686;transform:scaleX(1.0414);">Izmail engineering -</span>
<span class="t" style="left:117.50px;top:241.13px;font-size:9.3px;color:#4c4c4c;transform:scaleX(0.9827);">Будки</span>
<span class="t" style="left:30.00px;top:252.83px;font-size:9.3px;color:#4c4c4c;transform:scaleX(1.0062);">трансформаторні позамасштабні</span>
<span class="t" style="left:30.00px;top:277.63px;font-size:9.3px;color:#868686;transform:scaleX(1.0414);">Izmail engineering -</span>
<span class="t" style="left:117.50px;top:277.63px;font-size:9.3px;color:#4c4c4c;transform:scaleX(0.9910);">Колодязі оглядові</span>
<span class="t" style="left:30.00px;top:289.33px;font-size:9.3px;color:#4c4c4c;transform:scaleX(1.0050);">(люки)</span>
<span class="t" style="left:30.00px;top:314.13px;font-size:9.3px;color:#868686;transform:scaleX(1.0414);">Izmail engineering -</span>
<span class="t" style="left:117.50px;top:314.13px;font-size:9.3px;color:#4c4c4c;transform:scaleX(1.0063);">Стовп мет круглий</span>
<span class="t" style="left:30.00px;top:341.63px;font-size:9.3px;color:#868686;transform:scaleX(1.0414);">Izmail engineering -</span>
<span class="t" style="left:117.50px;top:341.63px;font-size:9.3px;color:#4c4c4c;">Стовп ЗБ круглий</span>
<span class="t" style="left:30.00px;top:368.63px;font-size:9.3px;color:#868686;transform:scaleX(1.0414);">Izmail engineering -</span>
<span class="t" style="left:117.50px;top:368.63px;font-size:9.3px;color:#4c4c4c;transform:scaleX(0.9906);">Стовп дер круглий</span>
<span class="t" style="left:30.00px;top:395.13px;font-size:9.3px;color:#868686;transform:scaleX(1.0414);">Izmail engineering -</span>
<span class="t" style="left:117.50px;top:395.13px;font-size:9.3px;color:#4c4c4c;transform:scaleX(0.9746);">Стовп мет</span>
<span class="t" style="left:30.00px;top:406.83px;font-size:9.3px;color:#4c4c4c;transform:scaleX(1.0115);">квадратний</span>
<span class="t" style="left:30.00px;top:431.63px;font-size:9.3px;color:#868686;transform:scaleX(1.0414);">Izmail engineering -</span>
<span class="t" style="left:117.50px;top:431.63px;font-size:9.3px;color:#4c4c4c;transform:scaleX(0.9796);">Стовп ЗБ</span>
<span class="t" style="left:30.00px;top:443.33px;font-size:9.3px;color:#4c4c4c;transform:scaleX(1.0115);">квадратний</span>
</body></html>
